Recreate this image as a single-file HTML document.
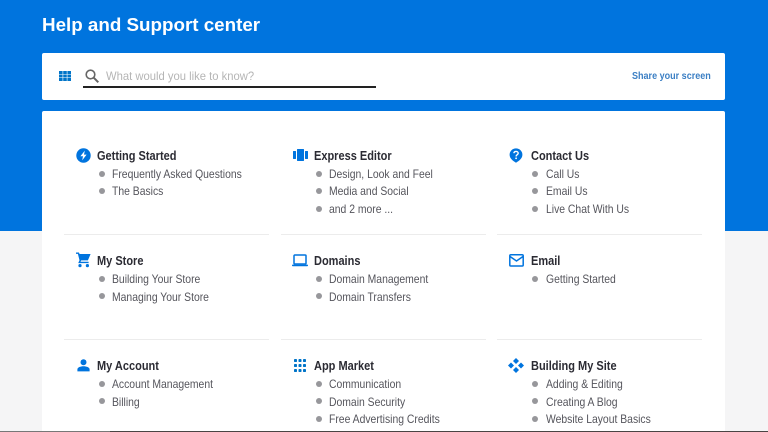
<!DOCTYPE html>
<html lang="en"><head><meta charset="utf-8"><title>Help and Support center</title>
<style>
html,body{margin:0;padding:0}
body{width:768px;height:432px;overflow:hidden;position:relative;background:#f5f5f6;font-family:"Liberation Sans",sans-serif}
div,svg,span{position:absolute}
.hero{left:0;top:0;width:768px;height:231px;background:#0074de}
.h1{left:42px;top:12px;font-size:18.8px;line-height:26px;font-weight:bold;color:#fff;white-space:nowrap}
.search{left:42px;top:53px;width:683px;height:47px;background:#fff;border-radius:2px}
.card{left:42px;top:111px;width:683px;height:321px;background:#fff;border-radius:2px 2px 0 0}
.ph{left:106px;top:68px;font-size:12px;line-height:16px;color:#b5b5b5;white-space:nowrap;transform:scaleX(.937);transform-origin:0 0}
.ul{left:83px;top:86px;width:293px;height:2px;background:#222}
.share{left:632px;top:69px;font-size:10.5px;line-height:14px;font-weight:bold;color:#3b7fc4;white-space:nowrap;transform:scaleX(.86);transform-origin:0 0}
.t{font-size:12.5px;line-height:16px;font-weight:bold;color:#2b2b33;white-space:nowrap;transform:scaleX(.88);transform-origin:0 0}
.i{font-size:12px;line-height:16px;color:#55555c;white-space:nowrap;transform:scaleX(.865);transform-origin:0 0}
.d{width:6px;height:6px;border-radius:50%;background:#97979b}
.hr{height:1px;background:#ececec;top:234px;width:205px}
.bar{left:0;top:431px;width:768px;height:1px;background:#777}
.bar2{left:110px;top:431px;width:658px;height:1px;background:#4a4444}
</style></head><body>
<div class="hero"></div>
<div class="h1">Help and Support center</div>
<div class="search"></div>
<div class="card"></div>

<svg style="left:59px;top:71px" width="12" height="10" viewBox="0 0 12 10" fill="#0074c8"><rect x="0" y="0" width="3.6" height="3"/><rect x="4.2" y="0" width="3.6" height="3"/><rect x="8.4" y="0" width="3.6" height="3"/><rect x="0" y="3.5" width="3.6" height="3"/><rect x="4.2" y="3.5" width="3.6" height="3"/><rect x="8.4" y="3.5" width="3.6" height="3"/><rect x="0" y="7" width="3.6" height="3"/><rect x="4.2" y="7" width="3.6" height="3"/><rect x="8.4" y="7" width="3.6" height="3"/></svg>
<svg style="left:85px;top:69px" width="14" height="14" viewBox="0 0 14 14" fill="none" stroke="#666" stroke-width="1.6"><circle cx="5.5" cy="5.5" r="4.3"/><path d="M8.6 8.6L13.3 13.3" stroke-width="2"/></svg>
<div class="ph">What would you like to know?</div>
<div class="ul"></div>
<div class="share">Share your screen</div>

<!-- Getting Started -->
<svg style="left:76px;top:148px" width="15" height="15" viewBox="0 0 15 15"><circle cx="7.5" cy="7.5" r="7.2" fill="#0074de"/><path d="M8.8 2.6L4.4 8.3H7L6.2 12.4L10.6 6.6H8Z" fill="#fff"/></svg>
<div class="t" style="left:97px;top:148px">Getting Started</div>
<div class="d" style="left:99px;top:171px"></div><div class="i" style="left:112px;top:166px">Frequently Asked Questions</div>
<div class="d" style="left:99px;top:188px"></div><div class="i" style="left:112px;top:183px">The Basics</div>

<!-- Express Editor -->
<svg style="left:293px;top:149px" width="15" height="12" viewBox="0 0 15 12" fill="#0074de"><rect x="0" y="2" width="3" height="8" rx=".5"/><rect x="4" y="0" width="7" height="12" rx=".6"/><rect x="12" y="2" width="3" height="8" rx=".5"/></svg>
<div class="t" style="left:314px;top:148px">Express Editor</div>
<div class="d" style="left:316px;top:171px"></div><div class="i" style="left:329px;top:166px">Design, Look and Feel</div>
<div class="d" style="left:316px;top:188px"></div><div class="i" style="left:329px;top:183px">Media and Social</div>
<div class="d" style="left:316px;top:206px"></div><div class="i" style="left:329px;top:201px">and 2 more ...</div>

<!-- Contact Us -->
<svg style="left:509px;top:148px" width="14" height="15" viewBox="0 0 14 15"><path d="M7 .4A6.4 6.4 0 0 0 .6 6.8C.6 10.4 3.6 12.6 7 14.8 10.4 12.6 13.4 10.4 13.4 6.8A6.4 6.4 0 0 0 7 .4Z" fill="#0074de"/><path d="M4.9 5.2C5 4 5.9 3.4 7 3.4S9.2 4.1 9.2 5.2C9.2 6.5 7.2 6.8 7.1 8.4" fill="none" stroke="#fff" stroke-width="1.4"/><circle cx="7.1" cy="10.3" r=".9" fill="#fff"/></svg>
<div class="t" style="left:531px;top:148px">Contact Us</div>
<div class="d" style="left:532px;top:171px"></div><div class="i" style="left:546px;top:166px">Call Us</div>
<div class="d" style="left:532px;top:188px"></div><div class="i" style="left:546px;top:183px">Email Us</div>
<div class="d" style="left:532px;top:206px"></div><div class="i" style="left:546px;top:201px">Live Chat With Us</div>

<div class="hr" style="left:64px"></div><div class="hr" style="left:281px"></div><div class="hr" style="left:497px"></div>

<!-- My Store -->
<svg style="left:76px;top:252px" width="15" height="16" viewBox="0 0 15 16" fill="#0074de"><path d="M0 .5H2.9L3.6 2H14.6L11.9 8.4H5.2L4.5 9.7H12.6V11.1H2.2L3.5 8.3 1.9 1.9H0Z"/><circle cx="4" cy="13.6" r="1.6"/><circle cx="11.4" cy="13.6" r="1.6"/></svg>
<div class="t" style="left:97px;top:253px">My Store</div>
<div class="d" style="left:99px;top:276px"></div><div class="i" style="left:112px;top:271px">Building Your Store</div>
<div class="d" style="left:99px;top:293px"></div><div class="i" style="left:112px;top:289px">Managing Your Store</div>

<!-- Domains -->
<svg style="left:292px;top:254px" width="16" height="13" viewBox="0 0 16 13"><rect x="2" y="1" width="12" height="9" rx=".8" fill="none" stroke="#0074de" stroke-width="1.5"/><rect x="0" y="10.6" width="16" height="1.6" rx=".7" fill="#0074de"/></svg>
<div class="t" style="left:314px;top:253px">Domains</div>
<div class="d" style="left:316px;top:276px"></div><div class="i" style="left:329px;top:271px">Domain Management</div>
<div class="d" style="left:316px;top:293px"></div><div class="i" style="left:329px;top:289px">Domain Transfers</div>

<!-- Email -->
<svg style="left:509px;top:254px" width="15" height="13" viewBox="0 0 15 13" fill="none" stroke="#0074de" stroke-width="1.5"><rect x=".8" y=".8" width="13.4" height="11.2" rx="1"/><path d="M1.2 2.6L7.5 7 13.8 2.6"/></svg>
<div class="t" style="left:531px;top:253px">Email</div>
<div class="d" style="left:532px;top:276px"></div><div class="i" style="left:546px;top:271px">Getting Started</div>

<div class="hr" style="left:64px;top:339px"></div><div class="hr" style="left:281px;top:339px"></div><div class="hr" style="left:497px;top:339px"></div>

<!-- My Account -->
<svg style="left:77px;top:359px" width="13" height="13" viewBox="0 0 13 13" fill="#0074de"><circle cx="6.5" cy="3.2" r="3"/><path d="M.4 12.4V10.4C.4 8.4 3.6 7.3 6.5 7.3S12.6 8.4 12.6 10.4V12.4Z"/></svg>
<div class="t" style="left:97px;top:358px">My Account</div>
<div class="d" style="left:99px;top:381px"></div><div class="i" style="left:112px;top:376px">Account Management</div>
<div class="d" style="left:99px;top:398px"></div><div class="i" style="left:112px;top:394px">Billing</div>

<!-- App Market -->
<svg style="left:294px;top:359px" width="12" height="13" viewBox="0 0 12 13" fill="#0074c8"><rect x="0" y="0" width="3" height="3" rx=".8"/><rect x="4.5" y="0" width="3" height="3" rx=".8"/><rect x="9" y="0" width="3" height="3" rx=".8"/><rect x="0" y="5" width="3" height="3" rx=".8"/><rect x="4.5" y="5" width="3" height="3" rx=".8"/><rect x="9" y="5" width="3" height="3" rx=".8"/><rect x="0" y="10" width="3" height="3" rx=".8"/><rect x="4.5" y="10" width="3" height="3" rx=".8"/><rect x="9" y="10" width="3" height="3" rx=".8"/></svg>
<div class="t" style="left:314px;top:358px">App Market</div>
<div class="d" style="left:316px;top:381px"></div><div class="i" style="left:329px;top:376px">Communication</div>
<div class="d" style="left:316px;top:398px"></div><div class="i" style="left:329px;top:394px">Domain Security</div>
<div class="d" style="left:316px;top:416px"></div><div class="i" style="left:329px;top:411px">Free Advertising Credits</div>

<!-- Building My Site -->
<svg style="left:508px;top:358px" width="16" height="15" viewBox="0 0 16 15" fill="#0074de"><path d="M8 0L11 3 8 6 5 3Z"/><path d="M8 9L11 12 8 15 5 12Z"/><path d="M3 4.5L6 7.5 3 10.5 0 7.5Z"/><path d="M13 4.5L16 7.5 13 10.5 10 7.5Z"/></svg>
<div class="t" style="left:531px;top:358px">Building My Site</div>
<div class="d" style="left:532px;top:381px"></div><div class="i" style="left:546px;top:376px">Adding &amp; Editing</div>
<div class="d" style="left:532px;top:398px"></div><div class="i" style="left:546px;top:394px">Creating A Blog</div>
<div class="d" style="left:532px;top:416px"></div><div class="i" style="left:546px;top:411px">Website Layout Basics</div>

<div class="bar"></div><div class="bar2"></div>
</body></html>
